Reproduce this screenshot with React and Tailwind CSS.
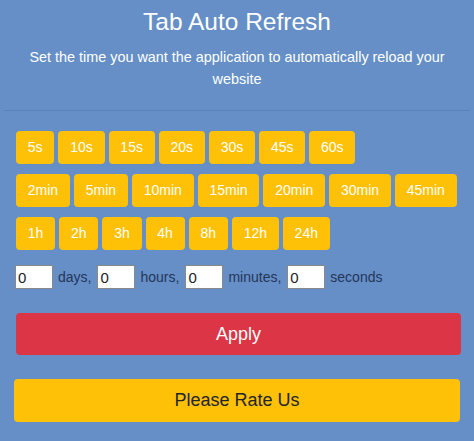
import React, { useState } from 'react';

const rows = [
  ['5s', '10s', '15s', '20s', '30s', '45s', '60s'],
  ['2min', '5min', '10min', '15min', '20min', '30min', '45min'],
  ['1h', '2h', '3h', '4h', '8h', '12h', '24h'],
];

const units = ['days,', 'hours,', 'minutes,', 'seconds'];

const App = () => {
  const [values, setValues] = useState([0, 0, 0, 0]);

  const handleChange = (i, v) => {
    setValues(prev => prev.map((x, j) => (j === i ? v : x)));
  };

  return (
    <div className="w-[474px] h-[441px] bg-[#658fc6] font-['Liberation_Sans',Arial,sans-serif] overflow-hidden">
      <div className="pt-[8px] pb-[20px] px-2 text-center text-white border-b border-[#5a82b8] mx-[4px]">
        <h1 className="text-[24.5px] leading-[28px]">Tab Auto Refresh</h1>
        <p className="mt-[10px] text-[14.4px] leading-[22px]">
          Set the time you want the application to automatically reload your website
        </p>
      </div>

      <div className="px-4 pt-[20px]">
        <div className="flex flex-col gap-[10px]">
          {rows.map((row, i) => (
            <div key={i} className="flex gap-[4px]">
              {row.map(label => (
                <button
                  key={label}
                  className="h-[33px] px-[11.8px] bg-[#ffc107] text-white text-[14px] rounded-[4px]"
                >
                  {label}
                </button>
              ))}
            </div>
          ))}
        </div>

        <div className="flex items-center gap-[5px] mt-[15px] -ml-[1px] text-[14px] text-[#25355a]">
          {units.map((u, i) => (
            <React.Fragment key={u}>
              <input
                type="text"
                value={values[i]}
                onChange={e => handleChange(i, e.target.value)}
                className="w-[38px] h-[24px] bg-white border border-[#8a8a8a] px-[2px] text-[15px] text-[#222] outline-none"
              />
              <span className="mr-[1px]">{u}</span>
            </React.Fragment>
          ))}
        </div>

        <button className="mt-[24px] w-[445px] h-[42px] bg-[#dc3545] text-white text-[18px] rounded-[4px]">
          Apply
        </button>

        <button className="mt-[24px] -ml-[2px] w-[446px] h-[43px] bg-[#ffc107] text-[#212529] text-[18px] rounded-[4px] block">
          Please Rate Us
        </button>
      </div>
    </div>
  );
};

export default App;
